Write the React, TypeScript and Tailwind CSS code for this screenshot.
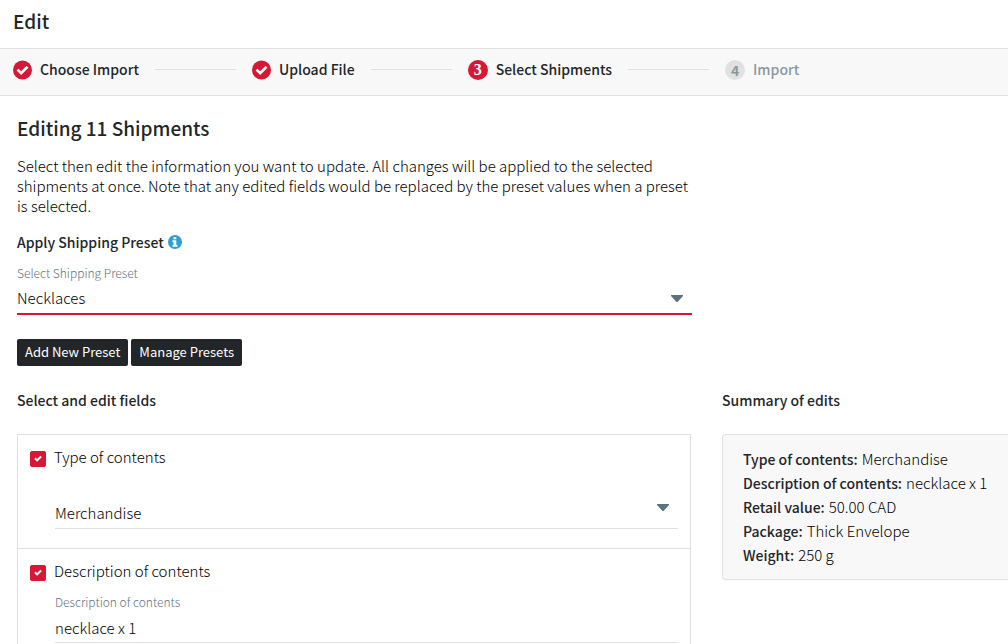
import { useState } from 'react'

interface Step {
  title: string
  state: 'done' | 'current' | 'upcoming'
}

const STEPS: Step[] = [
  { title: 'Choose Import', state: 'done' },
  { title: 'Upload File', state: 'done' },
  { title: 'Select Shipments', state: 'current' },
  { title: 'Import', state: 'upcoming' },
]

// Small triangle at the right end of a drop-down
function Caret({ className }: { className: string }) {
  return (
    <svg viewBox="0 0 12 7" className={`pointer-events-none absolute right-[9px] h-[7px] w-[12px] fill-[#5d737e] ${className}`}>
      <path d="M0 0h12v1L6.500 7h-1L0 1z" />
    </svg>
  )
}

function InfoIcon() {
  return (
    <svg viewBox="0 0 14 14" className="size-[14px]">
      <circle cx="7" cy="7" r="7" fill="#2f9fd0" />
      <path d="M5.5 2.2h2.8v2H5.5zM4.5 5.3h3.8v4.6h1.1v1.9H4.5V9.9h1.1V7.2H4.5z" fill="#fff" />
    </svg>
  )
}

function StepMarker({ step, number }: { step: Step; number: number }) {
  if (step.state === 'done') {
    return (
      <svg viewBox="0 0 19 20" className="h-5 w-[19px] shrink-0">
        <circle cx="9.5" cy="10" r="9.5" fill="#d61834" />
        <path d="M4.5 9.6l3.7 3.6 6.3-6.4" fill="none" stroke="#fff" strokeWidth="2.7" />
      </svg>
    )
  }
  const colors =
    step.state === 'current'
      ? "bg-[#d61834] text-white font-['Liberation_Serif',serif] text-base"
      : 'bg-[#e1e1e1] text-[#8b999f] text-sm'
  return (
    <span className={`flex size-5 shrink-0 items-center justify-center rounded-full font-bold ${colors}`}>
      <span className="pb-px leading-5">{number}</span>
    </span>
  )
}

function FieldRow({ id, title, children }: { id: string; title: string; children: React.ReactNode }) {
  const [checked, setChecked] = useState(true)

  return (
    <div className="border-b border-[#dcdfe3] px-3 pt-[10px] pb-[19px]">
      <div className="flex items-start gap-2">
        <span className="relative mt-[6px] size-4">
          <input
            id={id}
            type="checkbox"
            checked={checked}
            onChange={() => setChecked(!checked)}
            className="block size-4 appearance-none rounded-[2px] border border-[#d61834] checked:bg-[#d61834]"
          />
          {checked && (
            <svg viewBox="0 0 16 16" className="pointer-events-none absolute inset-0 size-4">
              <path d="M4.9 7.3l2.2 2.1 4-3.9" fill="none" stroke="#fff" strokeWidth="2" />
            </svg>
          )}
        </span>
        <label htmlFor={id} className="text-[15px] leading-6 font-light text-black">{title}</label>
      </div>
      <div className="pt-[9px] pl-[25px]">{children}</div>
    </div>
  )
}

function App() {
  const [preset, setPreset] = useState('Necklaces')
  const [contents, setContents] = useState('Merchandise')
  const [description, setDescription] = useState('necklace x 1')

  const summary = [
    { label: 'Type of contents', value: contents },
    { label: 'Description of contents', value: description },
    { label: 'Retail value', value: '50.00 CAD' },
    { label: 'Package', value: 'Thick Envelope' },
    { label: 'Weight', value: '250 g' },
  ]

  return (
    <div className="min-h-screen bg-white font-['Noto_Sans_CJK_SC',sans-serif] text-sm text-[#222629]">
      <header className="px-[13px] pt-[7px] pb-[13px]">
        <h1 className="text-[19px] leading-7 font-medium">Edit</h1>
      </header>

      {/* Steps */}
      <ol className="flex items-center gap-4 border-y border-[#e1e1e1] bg-[#f8f8f8] px-[13px] pt-[10px] pb-[14px]">
        {STEPS.map((step, i) => (
          <li key={step.title} className="flex items-center gap-4">
            {i > 0 && <span className="mb-[2px] h-px w-[81px] bg-[#e1e1e1]" />}
            <span className="flex items-center gap-2">
              <StepMarker step={step} number={i + 1} />
              <span className={`pb-[2px] leading-5 font-medium ${step.state === 'upcoming' ? 'text-[#8b999f]' : ''}`}>
                {step.title}
              </span>
            </span>
          </li>
        ))}
      </ol>

      <main className="grid grid-cols-[675fr_286fr] gap-x-[30px] pt-[18px] pl-[17px]">
        <section>
          <h2 className="text-[19px] leading-7 font-medium">Editing 11 Shipments</h2>
          <p className="mt-[14px] text-[15px] leading-5 font-light text-black">
            Select then edit the information you want to update. All changes will be applied to the selected shipments
            at once. Note that any edited fields would be replaced by the preset values when a preset is selected.
          </p>

          <h3 className="mt-4 flex items-center gap-1 leading-5 font-medium">
            Apply Shipping Preset
            <InfoIcon />
          </h3>

          <label htmlFor="preset" className="mt-[11px] block text-xs leading-5 font-light text-[#5d737e]">
            Select Shipping Preset
          </label>
          <div className="relative mt-px border-b-2 border-[#d61834]">
            <select
              id="preset"
              value={preset}
              onChange={e => setPreset(e.target.value)}
              className="block h-[29px] w-full appearance-none pb-[2px] text-[15px] font-light text-black outline-none"
            >
              <option>Necklaces</option>
            </select>
            <Caret className="bottom-[11px]" />
          </div>

          <div className="mt-6 flex gap-[3px]">
            <button className="rounded-[2px] bg-[#222629] px-2 pt-[3px] pb-[5px] text-[13px] leading-[19px] text-white">
              Add New Preset
            </button>
            <button className="rounded-[2px] bg-[#222629] px-2 pt-[3px] pb-[5px] text-[13px] leading-[19px] text-white">
              Manage Presets
            </button>
          </div>
        </section>

        <section className="col-start-1 mt-6">
          <h3 className="leading-5 font-medium">Select and edit fields</h3>
          <div className="mt-6 mr-px border border-b-0 border-[#dcdfe3]">
            <FieldRow id="edit-contents" title="Type of contents">
              <div className="relative mt-5 border-b border-[#e1e1e1]">
                <select
                  aria-label="Type of contents"
                  value={contents}
                  onChange={e => setContents(e.target.value)}
                  className="block h-[30px] w-full appearance-none text-[15px] font-light text-black outline-none"
                >
                  <option>Merchandise</option>
                </select>
                <Caret className="bottom-[17px]" />
              </div>
            </FieldRow>
            <FieldRow id="edit-description" title="Description of contents">
              <label htmlFor="description" className="block text-xs leading-5 font-light text-[#5d737e]">
                Description of contents
              </label>
              <input
                id="description"
                type="text"
                value={description}
                onChange={e => setDescription(e.target.value)}
                className="block h-[31px] w-full border-b border-[#e1e1e1] text-[15px] font-light text-black outline-none"
              />
            </FieldRow>
          </div>
        </section>

        <aside className="mt-6">
          <h3 className="leading-5 font-medium">Summary of edits</h3>
          <ul className="mt-6 rounded-l border border-r-0 border-[#e1e1e1] bg-[#f8f8f8] py-3 pr-3 pl-5">
            {summary.map(item => (
              <li key={item.label} className="flex items-baseline gap-1 leading-6">
                <span className="font-medium">{item.label}:</span>
                <span className="text-[15px] font-light text-black">{item.value}</span>
              </li>
            ))}
          </ul>
        </aside>
      </main>
    </div>
  )
}

export default App
